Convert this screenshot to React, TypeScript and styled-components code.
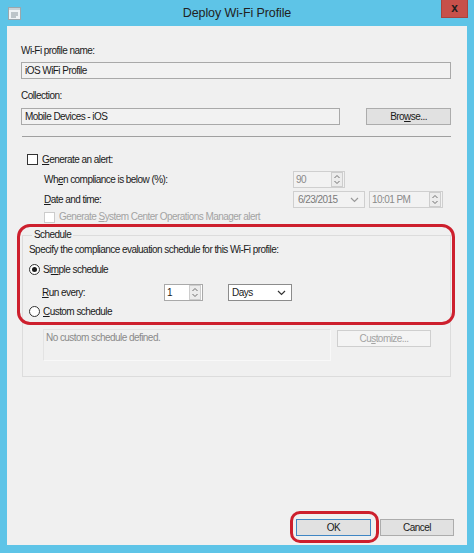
import React from 'react'
import styled, { createGlobalStyle } from 'styled-components'

const GlobalStyle = createGlobalStyle`
    html, body { margin: 0; padding: 0; background: #5ec4e7; }
    * { box-sizing: border-box; }
`

const Window = styled.div`
    width: 474px;
    height: 553px;
    background: #5ec4e7;
    display: flex;
    flex-direction: column;
    font-family: "Liberation Sans", Arial, sans-serif;
    font-size: 10px;
    letter-spacing: -0.55px;
    color: #1a1a1a;
`

const TitleBar = styled.div`
    height: 26px;
    display: flex;
    align-items: flex-start;
    padding: 0 6px 0 8px;
`

const TitleIcon = styled.div`
    width: 13px;
    height: 13px;
    margin-top: 7px;
`

const TitleText = styled.div`
    flex: 1;
    text-align: center;
    font-size: 12.5px;
    letter-spacing: -0.1px;
    line-height: 26px;
    padding-left: 12px;
    color: #222;
`

const CloseBtn = styled.div`
    width: 27px;
    height: 18px;
    background: #c7504a;
    border: 1px solid #a8443f;
    border-top: none;
    display: flex;
    align-items: center;
    justify-content: center;
    color: #1e1e1e;
    font-weight: bold;
    font-size: 12px;
    letter-spacing: 0;
    padding-bottom: 2px;
`

const Client = styled.div`
    flex: 1;
    margin: 0 7px 8px 7px;
    background: #f0f0f0;
    display: flex;
    flex-direction: column;
    padding: 19px 16px 9px 14px;
`

const Label = styled.div<{ $mt?: number; $indent?: number; $disabled?: boolean }>`
    height: 12px;
    line-height: 12px;
    margin-top: ${(p) => p.$mt || 0}px;
    padding-left: ${(p) => p.$indent || 0}px;
    color: ${(p) => (p.$disabled ? '#a3a3a3' : '#1a1a1a')};
    white-space: nowrap;
`

const TextBox = styled.div<{ $w?: number; $disabled?: boolean }>`
    height: 17px;
    width: ${(p) => (p.$w ? `${p.$w}px` : '100%')};
    border: 1px solid ${(p) => (p.$disabled ? '#cfcfcf' : '#a9a9a9')};
    background: #f2f2f2;
    padding: 0 3px;
    line-height: 15px;
    color: ${(p) => (p.$disabled ? '#7a7a7a' : '#1a1a1a')};
    white-space: nowrap;
    display: flex;
    align-items: center;
    justify-content: space-between;
`

const Row = styled.div<{ $mt?: number; $h?: number; $indent?: number }>`
    display: flex;
    align-items: center;
    margin-top: ${(p) => p.$mt || 0}px;
    height: ${(p) => p.$h || 17}px;
    padding-left: ${(p) => p.$indent || 0}px;
`

const Button = styled.div<{ $w: number; $default?: boolean; $disabled?: boolean }>`
    width: ${(p) => p.$w}px;
    height: 17px;
    border: 1px solid ${(p) => (p.$default ? '#3f86c4' : p.$disabled ? '#cfcfcf' : '#acacac')};
    background: ${(p) => (p.$disabled ? '#f4f4f4' : '#e1e1e1')};
    color: ${(p) => (p.$disabled ? '#a3a3a3' : '#1a1a1a')};
    display: flex;
    align-items: center;
    justify-content: center;
    position: relative;
`

const Separator = styled.div`
    height: 1px;
    background: #a0a0a0;
    margin: 11px 0 0 1px;
`

const CheckBox = styled.div<{ $disabled?: boolean }>`
    width: 11px;
    height: 11px;
    border: 1px solid ${(p) => (p.$disabled ? '#cccccc' : '#333')};
    background: #fff;
    flex-shrink: 0;
`

const Radio = styled.div<{ $checked?: boolean }>`
    width: 11px;
    height: 11px;
    border-radius: 50%;
    border: 1px solid #333;
    background: #fff;
    flex-shrink: 0;
    display: flex;
    align-items: center;
    justify-content: center;
    &::after {
        content: '';
        width: 5px;
        height: 5px;
        border-radius: 50%;
        background: ${(p) => (p.$checked ? '#1a1a1a' : 'transparent')};
    }
`

const FieldLabel = styled.div<{ $w: number }>`
    width: ${(p) => p.$w}px;
    flex-shrink: 0;
    white-space: nowrap;
`

const Group = styled.div`
    margin: 12px 0 0 1px;
    padding: 0 0 15px 6px;
    border: 1px solid #dcdcdc;
    position: relative;
    display: flex;
    flex-direction: column;
`

const GroupTitle = styled.div`
    align-self: flex-start;
    margin: -7px 0 0 3px;
    padding: 0 2px;
    height: 12px;
    line-height: 12px;
    background: #f0f0f0;
`

const Highlight = styled.div`
    position: absolute;
    border: 3px solid #cd1f2d;
    border-radius: 13px;
    pointer-events: none;
`

const SchedHighlight = styled(Highlight)`
    left: -6px;
    top: -12px;
    width: 438px;
    height: 101px;
`

const OkHighlight = styled(Highlight)`
    left: -7px;
    top: -9px;
    right: -9px;
    bottom: -8px;
    border-radius: 10px;
`

const SpinWrap = styled.div<{ $w: number; $disabled?: boolean }>`
    width: ${(p) => p.$w}px;
    height: 17px;
    border: 1px solid ${(p) => (p.$disabled ? '#cfcfcf' : '#a9a9a9')};
    background: ${(p) => (p.$disabled ? '#f2f2f2' : '#fff')};
    display: flex;
    align-items: center;
    padding-left: 2px;
    color: ${(p) => (p.$disabled ? '#8a8a8a' : '#1a1a1a')};
    span { flex: 1; }
`

const SpinBtn = styled.div`
    width: 12px;
    height: 15px;
    margin-right: 1px;
    border: 1px solid #cdcdcd;
    background: #ececec;
    display: flex;
    align-items: center;
    justify-content: center;
`

const CustomBox = styled.div`
    width: 288px;
    height: 32px;
    border: 1px solid #e3e3e3;
    border-right-color: #f8f8f8;
    border-bottom-color: #f8f8f8;
    padding: 2px 2px;
    color: #8a8a8a;
    line-height: 12px;
`

const Footer = styled.div`
    margin-top: auto;
    display: flex;
    justify-content: flex-end;
    gap: 9px;
    margin-right: -3px;
`

const U = styled.span`
    text-decoration: underline;
`

const SpinArrows = () => (
    <SpinBtn>
        <svg width="8" height="11" viewBox="0 0 8 11">
            <path d="M1.5 4 L4 1.5 L6.5 4" stroke="#6f6f6f" fill="none" strokeWidth="1" />
            <path d="M1.5 7 L4 9.5 L6.5 7" stroke="#6f6f6f" fill="none" strokeWidth="1" />
        </svg>
    </SpinBtn>
)

const Chevron = ({ color }: { color: string }) => (
    <svg width="9" height="6" viewBox="0 0 9 6">
        <path d="M1 1 L4.5 4.5 L8 1" stroke={color} fill="none" strokeWidth="1.2" />
    </svg>
)

const App = () => {
    return (
        <>
            <GlobalStyle />
            <Window>
                <TitleBar>
                    <TitleIcon>
                        <svg width="13" height="13" viewBox="0 0 13 13">
                            <rect x="0.5" y="0.5" width="12" height="12" fill="#eef3f5" stroke="#9aa7ad" />
                            <rect x="1" y="1" width="11" height="2" fill="#c9d3d8" />
                            <path d="M3 6 H10 M3 8 H10 M3 10 H8" stroke="#8a979d" strokeWidth="1" />
                        </svg>
                    </TitleIcon>
                    <TitleText>Deploy Wi-Fi Profile</TitleText>
                    <CloseBtn>x</CloseBtn>
                </TitleBar>
                <Client>
                    <Label>Wi-Fi profile name:</Label>
                    <Row $mt={5}>
                        <TextBox>iOS WiFi Profile</TextBox>
                    </Row>
                    <Label $mt={11}>Collection:</Label>
                    <Row $mt={6} style={{ justifyContent: 'space-between' }}>
                        <TextBox $w={319}>Mobile Devices - iOS</TextBox>
                        <Button $w={85}>
                            <span>Bro<U>w</U>se...</span>
                        </Button>
                    </Row>
                    <Separator />

                    <Row $mt={16} $h={12} $indent={6}>
                        <CheckBox />
                        <span style={{ marginLeft: 4 }}><U>G</U>enerate an alert:</span>
                    </Row>
                    <Row $mt={6} $h={16} $indent={23}>
                        <FieldLabel $w={249}>Wh<U>e</U>n compliance is below (%):</FieldLabel>
                        <SpinWrap $w={52} $disabled>
                            <span>90</span>
                            <SpinArrows />
                        </SpinWrap>
                    </Row>
                    <Row $mt={4} $indent={23}>
                        <FieldLabel $w={249}><U>D</U>ate and time:</FieldLabel>
                        <TextBox $w={72} $disabled style={{ paddingLeft: 4, paddingRight: 5 }}>
                            <span>6/23/2015</span>
                            <Chevron color="#9a9a9a" />
                        </TextBox>
                        <SpinWrap $w={74} $disabled style={{ marginLeft: 4 }}>
                            <span>10:01 PM</span>
                            <SpinArrows />
                        </SpinWrap>
                    </Row>
                    <Row $mt={3} $h={12} $indent={23}>
                        <CheckBox $disabled />
                        <Label $disabled style={{ marginLeft: 4 }}>
                            Generate <U>S</U>ystem Center Operations Manager alert
                        </Label>
                    </Row>

                    <Group>
                        <GroupTitle>Schedule</GroupTitle>
                        <SchedHighlight />
                        <Label $mt={3}>Specify the compliance evaluation schedule for this Wi-Fi profile:</Label>
                        <Row $mt={7} $h={12}>
                            <Radio $checked />
                            <span style={{ marginLeft: 3 }}>Si<U>m</U>ple schedule</span>
                        </Row>
                        <Row $mt={9} $indent={13}>
                            <FieldLabel $w={122}><U>R</U>un every:</FieldLabel>
                            <SpinWrap $w={39}>
                                <span>1</span>
                                <SpinArrows />
                            </SpinWrap>
                            <TextBox $w={64} style={{ marginLeft: 25, background: '#fff', borderColor: '#8c8c8c', paddingRight: 5 }}>
                                <span>Days</span>
                                <Chevron color="#333" />
                            </TextBox>
                        </Row>
                        <Row $mt={4} $h={12}>
                            <Radio />
                            <span style={{ marginLeft: 3 }}><U>C</U>ustom schedule</span>
                        </Row>
                        <Row $mt={12} $h={32} $indent={14} style={{ alignItems: 'flex-start' }}>
                            <CustomBox>No custom schedule defined.</CustomBox>
                            <Button $w={94} $disabled style={{ marginLeft: 6, marginTop: 1 }}>
                                <span>Cu<U>s</U>tomize...</span>
                            </Button>
                        </Row>
                    </Group>

                    <Footer>
                        <Button $w={75} $default>
                            OK
                            <OkHighlight />
                        </Button>
                        <Button $w={74}>Cancel</Button>
                    </Footer>
                </Client>
            </Window>
        </>
    )
}

export default App
